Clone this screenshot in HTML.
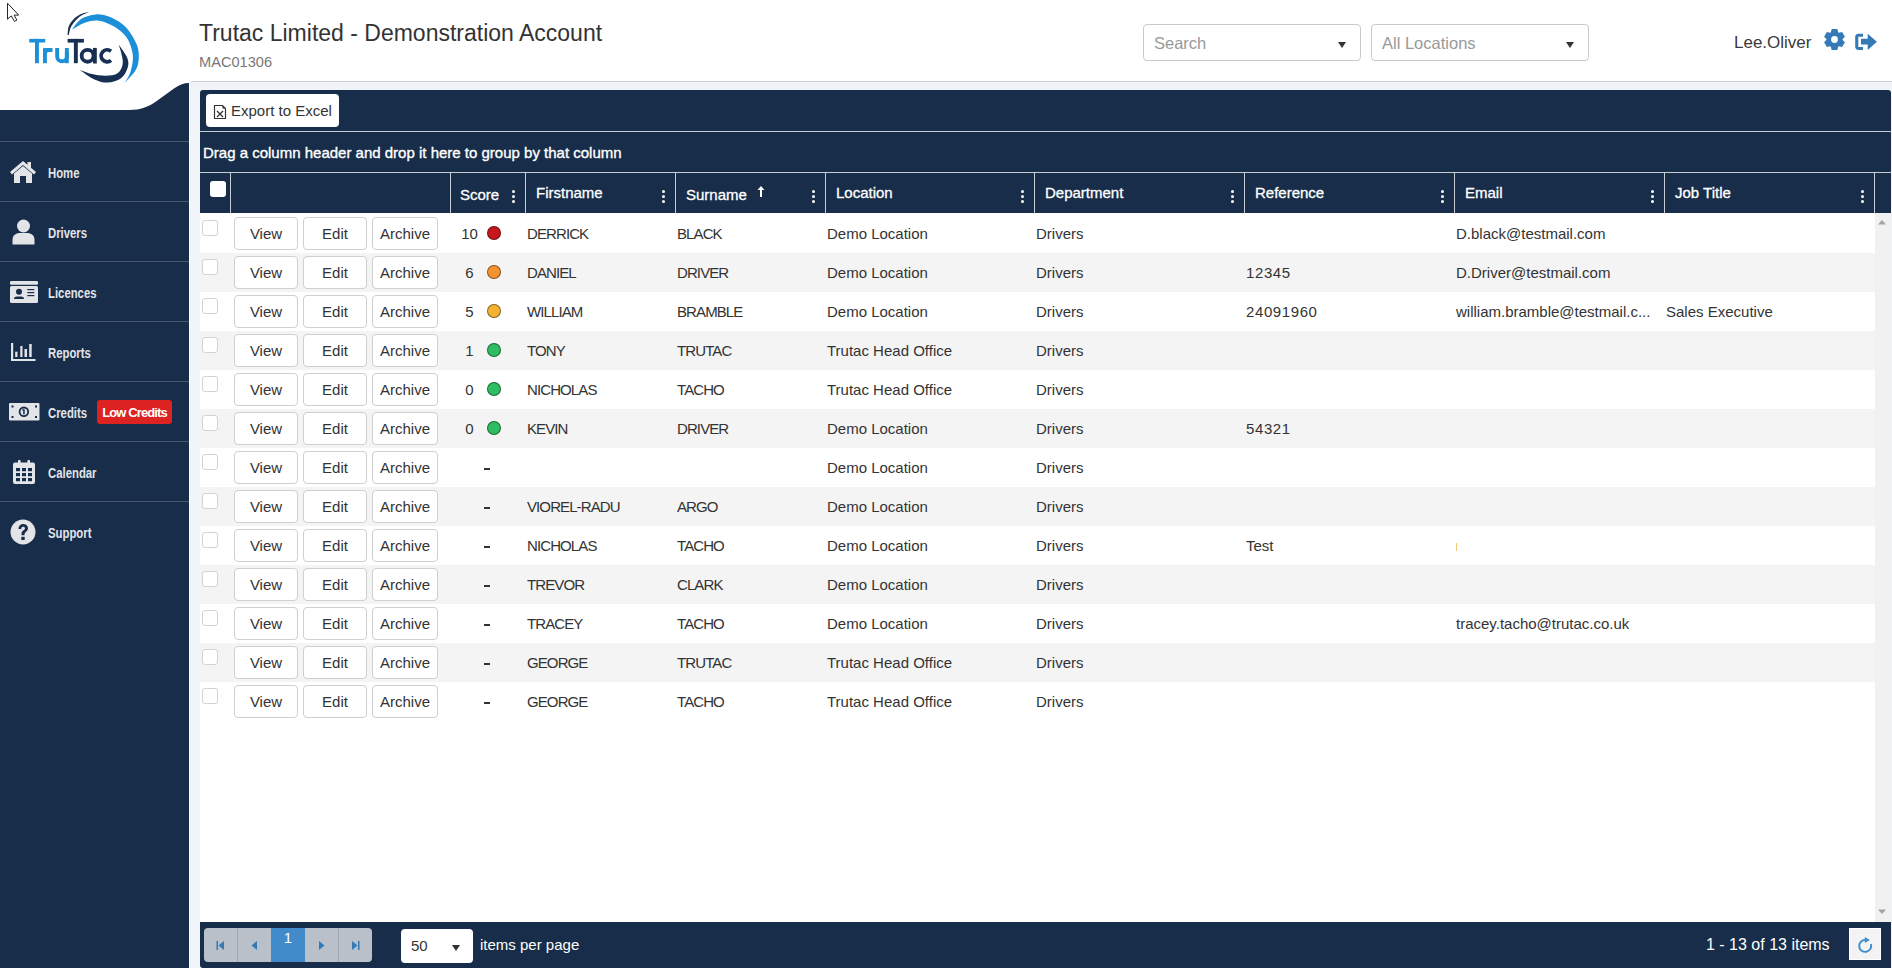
<!DOCTYPE html><html><head><meta charset="utf-8"><style>
*{box-sizing:border-box;margin:0;padding:0}
html,body{width:1892px;height:968px;overflow:hidden;background:#fff;font-family:"Liberation Sans",sans-serif;color:#333}
.a{position:absolute}
.sep{position:absolute;left:0;width:189px;height:1px;background:#46566c}
.nav{position:absolute;left:48px;font-size:14px;font-weight:bold;color:#e2e4e8;line-height:20px;white-space:nowrap;transform:scaleX(0.81);transform-origin:0 0}
.ico{position:absolute;fill:#e2e4e8}
.ht{position:absolute;color:#fff;font-size:15px;line-height:18px;white-space:nowrap;-webkit-text-stroke:0.3px #fff}
.vb{position:absolute;top:173px;width:1px;height:40px;background:#c9ced6}
.rw{position:absolute;left:200px;width:1675px;height:39px}
.btn{position:absolute;height:33px;border:1px solid #cfcfcf;border-radius:4px;background:#fff;font-size:15px;line-height:31px;text-align:center;color:#333}
.c{position:absolute;font-size:15px;line-height:39px;white-space:nowrap;color:#333}
.up{letter-spacing:-0.9px}
.dot{position:absolute;width:14px;height:14px;border-radius:50%;border:1px solid rgba(0,0,0,0.45)}
.cb{position:absolute;width:16px;height:16px;border:1px solid #d3d3d3;border-radius:3px;background:#fff}
.kb{position:absolute;width:4px;height:14px}
.kb i{display:block;width:3px;height:3px;border-radius:50%;background:#fff;margin:0 0 2px 0}
.pg{position:absolute;top:928px;height:34px;width:33px;background:#b9c0c9}
</style></head><body>
<div class="a" style="left:0;top:0;width:189px;height:968px;background:#172d49"></div>
<svg class="a" style="left:0;top:0" width="189" height="112" viewBox="0 0 189 112"><path d="M0 0 H189 V83 C183.5 83 179 85 174 88.5 L156 101.5 C148 107 141 110 129 110 H0 Z" fill="#fff"/></svg>
<div class="sep" style="top:141px"></div>
<div class="sep" style="top:201px"></div>
<div class="sep" style="top:261px"></div>
<div class="sep" style="top:321px"></div>
<div class="sep" style="top:381px"></div>
<div class="sep" style="top:441px"></div>
<div class="sep" style="top:501px"></div>
<div class="nav" style="top:163px">Home</div>
<div class="nav" style="top:223px">Drivers</div>
<div class="nav" style="top:283px">Licences</div>
<div class="nav" style="top:343px">Reports</div>
<div class="nav" style="top:403px">Credits</div>
<div class="nav" style="top:463px">Calendar</div>
<div class="nav" style="top:523px">Support</div>
<svg class="ico" style="left:9px;top:160px" width="28" height="24" viewBox="0 0 28 24"><path d="M14 1 L1 12 L3 14.5 L14 5 L25 14.5 L27 12 L22 7.7 V2 H18.5 V4.7 Z"/><path d="M5 13.5 L14 6 L23 13.5 V23 H17 V16 H11 V23 H5 Z"/></svg>
<svg class="ico" style="left:12px;top:219px" width="23" height="26" viewBox="0 0 23 26"><circle cx="11.5" cy="7" r="6.5"/><path d="M0.5 25.5 V21 C0.5 16 4 14 8 14 H15 C19 14 22.5 16 22.5 21 V25.5 Z"/></svg>
<svg class="ico" style="left:10px;top:281px" width="28" height="22" viewBox="0 0 28 22"><rect x="0" y="0" width="28" height="3.8" rx="1.2"/><rect x="0" y="5" width="28" height="17" rx="1.5"/><circle cx="9" cy="10.7" r="3" fill="#172d49"/><path d="M4 18 C4 16.2 5.5 15.5 7 15.5 H11 C12.5 15.5 14 16.2 14 18 Z" fill="#172d49"/><rect x="17.3" y="8" width="7" height="1.2" fill="#172d49"/><rect x="17.3" y="11" width="7" height="1.2" fill="#172d49"/><rect x="17.3" y="14" width="7" height="1.2" fill="#172d49"/></svg>
<svg class="ico" style="left:10px;top:342px" width="26" height="20" viewBox="0 0 26 20"><rect x="1" y="1" width="2.2" height="18"/><rect x="1" y="17" width="24.5" height="2"/><rect x="5.2" y="9.7" width="2.3" height="5.3"/><rect x="10.3" y="4" width="2.2" height="11"/><rect x="14.5" y="7" width="2.5" height="8"/><rect x="19.2" y="2" width="2.5" height="13"/></svg>
<svg class="ico" style="left:9px;top:403px" width="31" height="18" viewBox="0 0 31 18"><rect x="0" y="0" width="30.5" height="17.6" rx="1"/><circle cx="14.9" cy="8.8" r="4.3" fill="none" stroke="#172d49" stroke-width="1.8"/><rect x="14.2" y="6.3" width="1.5" height="5" fill="#172d49"/><rect x="13.3" y="6.3" width="1.5" height="1.2" fill="#172d49"/><rect x="2.5" y="2.5" width="2" height="2" fill="#172d49"/><rect x="26" y="2.5" width="2" height="2" fill="#172d49"/><rect x="2.5" y="13" width="2" height="2" fill="#172d49"/><rect x="26" y="13" width="2" height="2" fill="#172d49"/></svg>
<svg class="ico" style="left:13px;top:460px" width="22" height="24" viewBox="0 0 22 24"><rect x="5" y="0" width="2.6" height="4" rx="0.8"/><rect x="14.4" y="0" width="2.6" height="4" rx="0.8"/><rect x="0" y="2.5" width="22" height="21.5" rx="2"/><rect x="0" y="5.5" width="22" height="1.2" fill="#172d49" opacity="0"/><rect x="3" y="8" width="4" height="3.2" fill="#172d49"/><rect x="9" y="8" width="4" height="3.2" fill="#172d49"/><rect x="15" y="8" width="4" height="3.2" fill="#172d49"/><rect x="3" y="13" width="4" height="3.2" fill="#172d49"/><rect x="9" y="13" width="4" height="3.2" fill="#172d49"/><rect x="15" y="13" width="4" height="3.2" fill="#172d49"/><rect x="3" y="18" width="4" height="3.2" fill="#172d49"/><rect x="9" y="18" width="4" height="3.2" fill="#172d49"/><rect x="15" y="18" width="4" height="3.2" fill="#172d49"/></svg>
<svg class="ico" style="left:10px;top:519px" width="26" height="26" viewBox="0 0 26 26"><circle cx="13" cy="13" r="12.5"/><path d="M8.5 10 C8.5 6.5 11 5 13.2 5 C16 5 18 6.8 18 9.3 C18 12.5 14.5 13 14.5 15.5 V16.2 H11.5 V15 C11.5 11.5 15 11.2 15 9.3 C15 8.3 14.3 7.7 13.1 7.7 C11.8 7.7 11.3 8.6 11.3 10 Z" fill="#172d49"/><rect x="11.3" y="17.8" width="3.4" height="3.2" fill="#172d49"/></svg>
<div class="a" style="left:97px;top:400px;width:75px;height:24px;background:#dd2222;border-radius:3px;color:#fff;font-size:13px;font-weight:bold;line-height:26px;text-align:center;letter-spacing:-0.9px;white-space:nowrap">Low Credits</div>
<svg class="a" style="left:0;top:0" width="150" height="90" viewBox="0 0 150 90">
<path d="M71.9 29.6 C73.5 27.8 77.2 21.5 81.2 19.0 C85.2 16.5 90.7 14.7 95.6 14.4 C100.5 14.1 105.7 15.1 110.8 17.3 C115.9 19.5 121.8 23.1 126.1 27.5 C130.3 31.9 134.2 38.9 136.3 43.6 C138.4 48.3 138.8 51.3 138.8 55.5 C138.8 59.7 138.7 64.3 136.3 69.0 C133.9 73.7 126.4 81.0 124.4 83.4 C125.4 81.6 128.9 76.5 130.3 72.4 C131.7 68.3 132.8 62.9 132.9 58.8 C133.1 54.7 132.3 51.5 131.2 47.8 C130.1 44.1 128.9 40.3 126.1 36.8 C123.3 33.3 118.7 29.3 114.2 26.6 C109.7 23.9 103.8 21.4 99.0 20.7 C94.2 20.0 89.9 20.9 85.4 22.4 C80.9 23.9 74.2 28.4 71.9 29.6 Z" fill="#1b8fd8"/>
<path d="M67.6 35.1 C67.8 33.8 67.7 29.5 68.5 27.0 C69.3 24.5 70.8 22.3 72.7 20.2 C74.6 18.1 77.2 15.9 80.0 14.5 C82.8 13.1 88.1 12.2 89.7 11.8 C88.2 12.5 83.5 14.2 81.0 15.8 C78.5 17.4 76.5 19.5 74.8 21.5 C73.0 23.5 71.5 25.7 70.5 28.0 C69.5 30.3 69.1 33.9 68.8 35.1 Z" fill="#172f52"/>
<path d="M118.5 44.4 C119.9 46.5 125.5 53.4 127.0 57.2 C128.6 61.0 128.8 63.8 127.8 67.3 C126.8 70.8 124.4 75.8 121.0 78.3 C117.6 80.8 112.0 82.4 107.5 82.6 C103.0 82.8 98.5 81.3 93.9 79.2 C89.3 77.1 82.2 71.5 79.9 69.9 C82.0 70.6 87.9 73.1 92.2 74.1 C96.5 75.1 101.6 75.9 105.8 75.8 C110.0 75.7 114.8 75.3 117.6 73.3 C120.4 71.3 122.1 67.5 122.7 63.9 C123.3 60.4 121.7 55.2 121.0 52.0 C120.3 48.8 118.9 45.7 118.5 44.4 Z" fill="#172f52"/>
<g fill="#1b8fd8"><rect x="29.2" y="38.9" width="16" height="3.6"/><rect x="35" y="38.9" width="3.9" height="24.3"/>
<rect x="43" y="48.1" width="3.9" height="15.1"/><path d="M43 53 C43 49.8 45.3 48.1 48.5 48.1 H52.5 V51.9 H48.5 C47.6 51.9 46.9 52.6 46.9 53.6 Z"/>
<path d="M57.15 48.1 V56.4 A4.85 4.85 0 0 0 66.85 56.4 V48.1" fill="none" stroke="#1b8fd8" stroke-width="3.9"/><rect x="64.9" y="52" width="3.9" height="11.2"/></g>
<g fill="#172f52"><rect x="67.6" y="38.9" width="16.3" height="3.7"/><rect x="73.9" y="38.9" width="3.9" height="24.3"/>
<circle cx="87.6" cy="55.8" r="5.95" fill="none" stroke="#172f52" stroke-width="3.8"/><rect x="93" y="47.9" width="3.8" height="15.6"/>
<path d="M111 51.2 A6 6 0 1 0 111 60.4" fill="none" stroke="#172f52" stroke-width="3.8"/></g>
</svg>
<div class="a" style="left:190px;top:81px;width:1702px;height:887px;background:#f0f3f8;border-top:1px solid #cdd1d6;border-top-left-radius:3px"></div>
<div class="a" style="left:199px;top:19px;font-size:23px;line-height:28px;color:#333;white-space:nowrap">Trutac Limited - Demonstration Account</div>
<div class="a" style="left:199px;top:54px;font-size:14.6px;line-height:17px;color:#777;white-space:nowrap">MAC01306</div>
<div class="a" style="left:1143px;top:24px;width:218px;height:37px;border:1px solid #c9c9c9;border-radius:4px;background:#fff"></div>
<div class="a" style="left:1154px;top:34px;font-size:16.5px;line-height:19px;color:#999;white-space:nowrap">Search</div>
<svg class="a" style="left:1338px;top:42px" width="8" height="6" viewBox="0 0 8 6"><path d="M0 0 H8 L4 6 Z" fill="#333"/></svg>
<div class="a" style="left:1371px;top:24px;width:218px;height:37px;border:1px solid #c9c9c9;border-radius:4px;background:#fff"></div>
<div class="a" style="left:1382px;top:34px;font-size:16.5px;line-height:19px;color:#999;white-space:nowrap">All Locations</div>
<svg class="a" style="left:1566px;top:42px" width="8" height="6" viewBox="0 0 8 6"><path d="M0 0 H8 L4 6 Z" fill="#333"/></svg>
<div class="a" style="left:1734px;top:33px;font-size:17px;line-height:20px;color:#3a3a3a;white-space:nowrap">Lee.Oliver</div>
<svg class="a" style="left:1824px;top:29px" width="21" height="21" viewBox="-0.5 0 21 21"><path fill="#337ab7" fill-rule="evenodd" d="M6.30 3.29 L7.20 0.10 L12.80 0.10 L13.70 3.29 L14.40 3.69 L17.61 2.88 L20.41 7.72 L18.10 10.10 L18.10 10.90 L20.41 13.28 L17.61 18.12 L14.40 17.31 L13.70 17.71 L12.80 20.90 L7.20 20.90 L6.30 17.71 L5.60 17.31 L2.39 18.12 L-0.41 13.28 L1.90 10.90 L1.90 10.10 L-0.41 7.72 L2.39 2.88 L5.60 3.69 Z M13.4 10.5 A3.4 3.4 0 1 0 6.6 10.5 A3.4 3.4 0 1 0 13.4 10.5 Z"/></svg>
<svg class="a" style="left:1855px;top:33px" width="23" height="18" viewBox="0 0 23 18"><path fill="#337ab7" d="M8 0.8 H3.5 C1.5 0.8 0.2 2 0.2 4 V13.8 C0.2 15.8 1.5 17 3.5 17 H8 V14 H3.3 V3.8 H8 Z"/><path fill="#337ab7" d="M6 5.8 H12.7 V0.8 L21.9 8.7 L12.7 17 V11.6 H6 Z"/></svg>
<svg class="a" style="left:0;top:0" width="24" height="24" viewBox="0 0 24 24"><path d="M7.5 3.2 L7.5 19.2 L11.3 15.9 L14.4 21.4 L16.9 20.1 L14.1 15.1 L18.7 15.1 Z" fill="#fff" stroke="#1a1a1a" stroke-width="0.95" stroke-linejoin="round"/></svg>
<div class="a" style="left:200px;top:90px;width:1691px;height:878px;background:#172d49;border-radius:3px 3px 0 3px"></div>
<div class="a" style="left:206px;top:94px;width:133px;height:33px;background:#fff;border-radius:4px"></div>
<svg class="a" style="left:213px;top:104px" width="14" height="16" viewBox="0 0 14 16"><path d="M1.5 1.5 H9.5 L12.5 4.5 V14.5 H1.5 Z" fill="none" stroke="#333" stroke-width="1.2"/><path d="M9.5 1.5 V4.5 H12.5 Z" fill="#333"/><path d="M4 7 L10 13 M10 7 L4 13" stroke="#333" stroke-width="1.3"/></svg>
<div class="a" style="left:231px;top:102px;font-size:15px;line-height:18px;color:#333;white-space:nowrap">Export to Excel</div>
<div class="a" style="left:200px;top:131px;width:1691px;height:1px;background:#c8cdd4"></div>
<div class="a" style="left:203px;top:144px;font-size:15px;line-height:18px;color:#fff;white-space:nowrap;-webkit-text-stroke:0.35px #fff">Drag a column header and drop it here to group by that column</div>
<div class="a" style="left:200px;top:172px;width:1691px;height:1px;background:#c8cdd4"></div>
<div class="vb" style="left:230px"></div>
<div class="vb" style="left:450px"></div>
<div class="vb" style="left:525px"></div>
<div class="vb" style="left:675px"></div>
<div class="vb" style="left:825px"></div>
<div class="vb" style="left:1034px"></div>
<div class="vb" style="left:1244px"></div>
<div class="vb" style="left:1454px"></div>
<div class="vb" style="left:1664px"></div>
<div class="vb" style="left:1874px"></div>
<div class="a" style="left:210px;top:181px;width:16px;height:16px;background:#fff;border-radius:3px"></div>
<div class="ht" style="left:460px;top:186px">Score</div>
<div class="kb" style="left:512px;top:190px"><i></i><i></i><i></i></div>
<div class="ht" style="left:536px;top:184px">Firstname</div>
<div class="kb" style="left:662px;top:190px"><i></i><i></i><i></i></div>
<div class="ht" style="left:686px;top:186px">Surname</div>
<div class="kb" style="left:812px;top:190px"><i></i><i></i><i></i></div>
<div class="ht" style="left:836px;top:184px">Location</div>
<div class="kb" style="left:1021px;top:190px"><i></i><i></i><i></i></div>
<div class="ht" style="left:1045px;top:184px">Department</div>
<div class="kb" style="left:1231px;top:190px"><i></i><i></i><i></i></div>
<div class="ht" style="left:1255px;top:184px">Reference</div>
<div class="kb" style="left:1441px;top:190px"><i></i><i></i><i></i></div>
<div class="ht" style="left:1465px;top:184px">Email</div>
<div class="kb" style="left:1651px;top:190px"><i></i><i></i><i></i></div>
<div class="ht" style="left:1675px;top:184px">Job Title</div>
<div class="kb" style="left:1861px;top:190px"><i></i><i></i><i></i></div>
<svg class="a" style="left:757px;top:186px" width="8" height="11" viewBox="0 0 8 11"><path d="M4 0 L7.5 4 H5 V11 H3 V4 H0.5 Z" fill="#fff"/></svg>
<div class="a" style="left:200px;top:213px;width:1675px;height:709px;background:#fff"></div>
<div class="a" style="left:1875px;top:213px;width:16px;height:709px;background:#f1f1f1"></div>
<svg class="a" style="left:1877px;top:219px" width="10" height="6" viewBox="0 0 10 6"><path d="M1 5.5 L5 1 L9 5.5 Z" fill="#a3a3a3"/></svg>
<svg class="a" style="left:1877px;top:909px" width="10" height="6" viewBox="0 0 10 6"><path d="M1 0.5 L5 5 L9 0.5 Z" fill="#a3a3a3"/></svg>
<div class="rw" style="top:213px;height:40px;background:#fff"></div>
<div class="cb" style="left:202px;top:220px"></div>
<div class="btn" style="left:234px;top:217px;width:64px">View</div>
<div class="btn" style="left:303px;top:217px;width:64px">Edit</div>
<div class="btn" style="left:372px;top:217px;width:66px">Archive</div>
<div class="c" style="left:449px;width:41px;text-align:center;top:214px">10</div>
<div class="dot" style="left:487px;top:226px;background:#c8161d"></div>
<div class="c up" style="left:527px;top:214px">DERRICK</div>
<div class="c up" style="left:677px;top:214px">BLACK</div>
<div class="c" style="left:827px;top:214px">Demo Location</div>
<div class="c" style="left:1036px;top:214px">Drivers</div>
<div class="c" style="left:1456px;top:214px">D.black@testmail.com</div>
<div class="rw" style="top:253px;height:39px;background:#f4f4f4"></div>
<div class="cb" style="left:202px;top:259px"></div>
<div class="btn" style="left:234px;top:256px;width:64px">View</div>
<div class="btn" style="left:303px;top:256px;width:64px">Edit</div>
<div class="btn" style="left:372px;top:256px;width:66px">Archive</div>
<div class="c" style="left:449px;width:41px;text-align:center;top:253px">6</div>
<div class="dot" style="left:487px;top:265px;background:#f7932f"></div>
<div class="c up" style="left:527px;top:253px">DANIEL</div>
<div class="c up" style="left:677px;top:253px">DRIVER</div>
<div class="c" style="left:827px;top:253px">Demo Location</div>
<div class="c" style="left:1036px;top:253px">Drivers</div>
<div class="c" style="left:1246px;top:253px;letter-spacing:0.6px">12345</div>
<div class="c" style="left:1456px;top:253px">D.Driver@testmail.com</div>
<div class="rw" style="top:292px;height:39px;background:#fff"></div>
<div class="cb" style="left:202px;top:298px"></div>
<div class="btn" style="left:234px;top:295px;width:64px">View</div>
<div class="btn" style="left:303px;top:295px;width:64px">Edit</div>
<div class="btn" style="left:372px;top:295px;width:66px">Archive</div>
<div class="c" style="left:449px;width:41px;text-align:center;top:292px">5</div>
<div class="dot" style="left:487px;top:304px;background:#f5b331"></div>
<div class="c up" style="left:527px;top:292px">WILLIAM</div>
<div class="c up" style="left:677px;top:292px">BRAMBLE</div>
<div class="c" style="left:827px;top:292px">Demo Location</div>
<div class="c" style="left:1036px;top:292px">Drivers</div>
<div class="c" style="left:1246px;top:292px;letter-spacing:0.6px">24091960</div>
<div class="c" style="left:1456px;top:292px">william.bramble@testmail.c...</div>
<div class="c" style="left:1666px;top:292px">Sales Executive</div>
<div class="rw" style="top:331px;height:39px;background:#f4f4f4"></div>
<div class="cb" style="left:202px;top:337px"></div>
<div class="btn" style="left:234px;top:334px;width:64px">View</div>
<div class="btn" style="left:303px;top:334px;width:64px">Edit</div>
<div class="btn" style="left:372px;top:334px;width:66px">Archive</div>
<div class="c" style="left:449px;width:41px;text-align:center;top:331px">1</div>
<div class="dot" style="left:487px;top:343px;background:#2ebd62"></div>
<div class="c up" style="left:527px;top:331px">TONY</div>
<div class="c up" style="left:677px;top:331px">TRUTAC</div>
<div class="c" style="left:827px;top:331px">Trutac Head Office</div>
<div class="c" style="left:1036px;top:331px">Drivers</div>
<div class="rw" style="top:370px;height:39px;background:#fff"></div>
<div class="cb" style="left:202px;top:376px"></div>
<div class="btn" style="left:234px;top:373px;width:64px">View</div>
<div class="btn" style="left:303px;top:373px;width:64px">Edit</div>
<div class="btn" style="left:372px;top:373px;width:66px">Archive</div>
<div class="c" style="left:449px;width:41px;text-align:center;top:370px">0</div>
<div class="dot" style="left:487px;top:382px;background:#2ebd62"></div>
<div class="c up" style="left:527px;top:370px">NICHOLAS</div>
<div class="c up" style="left:677px;top:370px">TACHO</div>
<div class="c" style="left:827px;top:370px">Trutac Head Office</div>
<div class="c" style="left:1036px;top:370px">Drivers</div>
<div class="rw" style="top:409px;height:39px;background:#f4f4f4"></div>
<div class="cb" style="left:202px;top:415px"></div>
<div class="btn" style="left:234px;top:412px;width:64px">View</div>
<div class="btn" style="left:303px;top:412px;width:64px">Edit</div>
<div class="btn" style="left:372px;top:412px;width:66px">Archive</div>
<div class="c" style="left:449px;width:41px;text-align:center;top:409px">0</div>
<div class="dot" style="left:487px;top:421px;background:#2ebd62"></div>
<div class="c up" style="left:527px;top:409px">KEVIN</div>
<div class="c up" style="left:677px;top:409px">DRIVER</div>
<div class="c" style="left:827px;top:409px">Demo Location</div>
<div class="c" style="left:1036px;top:409px">Drivers</div>
<div class="c" style="left:1246px;top:409px;letter-spacing:0.6px">54321</div>
<div class="rw" style="top:448px;height:39px;background:#fff"></div>
<div class="cb" style="left:202px;top:454px"></div>
<div class="btn" style="left:234px;top:451px;width:64px">View</div>
<div class="btn" style="left:303px;top:451px;width:64px">Edit</div>
<div class="btn" style="left:372px;top:451px;width:66px">Archive</div>
<div class="a" style="left:484px;top:468px;width:6px;height:2px;background:#333"></div>
<div class="c" style="left:827px;top:448px">Demo Location</div>
<div class="c" style="left:1036px;top:448px">Drivers</div>
<div class="rw" style="top:487px;height:39px;background:#f4f4f4"></div>
<div class="cb" style="left:202px;top:493px"></div>
<div class="btn" style="left:234px;top:490px;width:64px">View</div>
<div class="btn" style="left:303px;top:490px;width:64px">Edit</div>
<div class="btn" style="left:372px;top:490px;width:66px">Archive</div>
<div class="a" style="left:484px;top:507px;width:6px;height:2px;background:#333"></div>
<div class="c up" style="left:527px;top:487px">VIOREL-RADU</div>
<div class="c up" style="left:677px;top:487px">ARGO</div>
<div class="c" style="left:827px;top:487px">Demo Location</div>
<div class="c" style="left:1036px;top:487px">Drivers</div>
<div class="rw" style="top:526px;height:39px;background:#fff"></div>
<div class="cb" style="left:202px;top:532px"></div>
<div class="btn" style="left:234px;top:529px;width:64px">View</div>
<div class="btn" style="left:303px;top:529px;width:64px">Edit</div>
<div class="btn" style="left:372px;top:529px;width:66px">Archive</div>
<div class="a" style="left:484px;top:546px;width:6px;height:2px;background:#333"></div>
<div class="c up" style="left:527px;top:526px">NICHOLAS</div>
<div class="c up" style="left:677px;top:526px">TACHO</div>
<div class="c" style="left:827px;top:526px">Demo Location</div>
<div class="c" style="left:1036px;top:526px">Drivers</div>
<div class="c" style="left:1246px;top:526px;letter-spacing:0">Test</div>
<div class="a" style="left:1456px;top:543px;width:1px;height:8px;background:#f9c77a"></div>
<div class="rw" style="top:565px;height:39px;background:#f4f4f4"></div>
<div class="cb" style="left:202px;top:571px"></div>
<div class="btn" style="left:234px;top:568px;width:64px">View</div>
<div class="btn" style="left:303px;top:568px;width:64px">Edit</div>
<div class="btn" style="left:372px;top:568px;width:66px">Archive</div>
<div class="a" style="left:484px;top:585px;width:6px;height:2px;background:#333"></div>
<div class="c up" style="left:527px;top:565px">TREVOR</div>
<div class="c up" style="left:677px;top:565px">CLARK</div>
<div class="c" style="left:827px;top:565px">Demo Location</div>
<div class="c" style="left:1036px;top:565px">Drivers</div>
<div class="rw" style="top:604px;height:39px;background:#fff"></div>
<div class="cb" style="left:202px;top:610px"></div>
<div class="btn" style="left:234px;top:607px;width:64px">View</div>
<div class="btn" style="left:303px;top:607px;width:64px">Edit</div>
<div class="btn" style="left:372px;top:607px;width:66px">Archive</div>
<div class="a" style="left:484px;top:624px;width:6px;height:2px;background:#333"></div>
<div class="c up" style="left:527px;top:604px">TRACEY</div>
<div class="c up" style="left:677px;top:604px">TACHO</div>
<div class="c" style="left:827px;top:604px">Demo Location</div>
<div class="c" style="left:1036px;top:604px">Drivers</div>
<div class="c" style="left:1456px;top:604px">tracey.tacho@trutac.co.uk</div>
<div class="rw" style="top:643px;height:39px;background:#f4f4f4"></div>
<div class="cb" style="left:202px;top:649px"></div>
<div class="btn" style="left:234px;top:646px;width:64px">View</div>
<div class="btn" style="left:303px;top:646px;width:64px">Edit</div>
<div class="btn" style="left:372px;top:646px;width:66px">Archive</div>
<div class="a" style="left:484px;top:663px;width:6px;height:2px;background:#333"></div>
<div class="c up" style="left:527px;top:643px">GEORGE</div>
<div class="c up" style="left:677px;top:643px">TRUTAC</div>
<div class="c" style="left:827px;top:643px">Trutac Head Office</div>
<div class="c" style="left:1036px;top:643px">Drivers</div>
<div class="rw" style="top:682px;height:39px;background:#fff"></div>
<div class="cb" style="left:202px;top:688px"></div>
<div class="btn" style="left:234px;top:685px;width:64px">View</div>
<div class="btn" style="left:303px;top:685px;width:64px">Edit</div>
<div class="btn" style="left:372px;top:685px;width:66px">Archive</div>
<div class="a" style="left:484px;top:702px;width:6px;height:2px;background:#333"></div>
<div class="c up" style="left:527px;top:682px">GEORGE</div>
<div class="c up" style="left:677px;top:682px">TACHO</div>
<div class="c" style="left:827px;top:682px">Trutac Head Office</div>
<div class="c" style="left:1036px;top:682px">Drivers</div>
<div class="a" style="left:204px;top:928px;width:168px;height:34px;background:#b9c0c9;border-radius:4px"></div>
<div class="a" style="left:271px;top:928px;width:34px;height:34px;background:#428bca"></div>
<div class="a" style="left:237px;top:928px;width:1px;height:34px;background:#9fa7b1"></div>
<div class="a" style="left:338px;top:928px;width:1px;height:34px;background:#9fa7b1"></div>
<div class="a" style="left:271px;top:929px;width:34px;font-size:15px;line-height:18px;color:#fff;text-align:center">1</div>
<svg class="a" style="left:216px;top:940px" width="9" height="11" viewBox="0 0 9 11"><rect x="0.5" y="1" width="1.5" height="9" fill="#337ab7"/><path d="M8 1 V10 L2.5 5.5 Z" fill="#337ab7"/></svg>
<svg class="a" style="left:250px;top:940px" width="8" height="11" viewBox="0 0 8 11"><path d="M7 1 V10 L1.5 5.5 Z" fill="#337ab7"/></svg>
<svg class="a" style="left:318px;top:940px" width="8" height="11" viewBox="0 0 8 11"><path d="M1 1 V10 L6.5 5.5 Z" fill="#337ab7"/></svg>
<svg class="a" style="left:351px;top:940px" width="9" height="11" viewBox="0 0 9 11"><path d="M1 1 V10 L6.5 5.5 Z" fill="#337ab7"/><rect x="7" y="1" width="1.5" height="9" fill="#337ab7"/></svg>
<div class="a" style="left:401px;top:929px;width:72px;height:34px;background:#fff;border-radius:4px"></div>
<div class="a" style="left:411px;top:937px;font-size:15px;line-height:18px;color:#333">50</div>
<svg class="a" style="left:452px;top:945px" width="8" height="6" viewBox="0 0 8 6"><path d="M0 0 H8 L4 6 Z" fill="#333"/></svg>
<div class="a" style="left:480px;top:936px;font-size:15px;line-height:18px;color:#fff;white-space:nowrap">items per page</div>
<div class="a" style="left:1706px;top:935px;font-size:16px;line-height:19px;color:#fff;white-space:nowrap">1 - 13 of 13 items</div>
<div class="a" style="left:1849px;top:928px;width:32px;height:32px;background:#f3f3f3;border:1px solid #fff"></div>
<svg class="a" style="left:1855px;top:936px" width="20" height="20" viewBox="0 0 20 20"><path d="M10.2 3.9 A6 6 0 1 0 15.9 8" fill="none" stroke="#3b8bd1" stroke-width="1.9"/><path d="M9.8 0.9 L14.9 3.9 L9.8 6.9 Z" fill="#3b8bd1"/></svg>
</body></html>
